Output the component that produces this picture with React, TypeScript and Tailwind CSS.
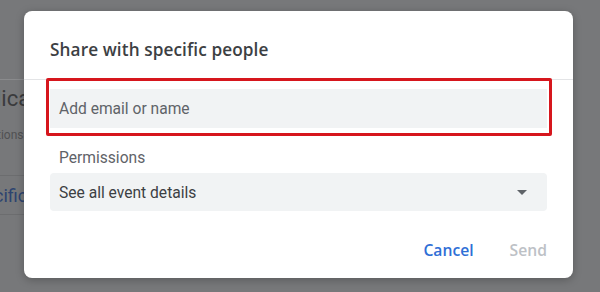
import React from "react";

export default function App() {
  return (
    <div
      className="relative w-[600px] h-[292px] overflow-hidden bg-[#77787a]"
      style={{ fontFamily: "Roboto, 'Liberation Sans', sans-serif" }}
    >
      {/* dimmed page behind the dialog */}
      <div className="flex flex-col pt-[79px] w-[60px]">
        <div className="h-px bg-[#8a8b8d]" />
        <div className="h-[38px] flex items-center -ml-[4px] text-[22px] text-[#3a3b3d] leading-none whitespace-nowrap">
          lica
        </div>
        <div className="h-[26px] flex items-end -ml-[3px] text-[12px] text-[#505153] whitespace-nowrap">
          tions
        </div>
        <div className="h-[31px]" />
        <div className="h-px bg-[#6c6d6f]" />
        <div className="h-[38px] flex items-center -ml-[6px] text-[18px] text-[#2d4470] whitespace-nowrap">
          cific
        </div>
        <div className="h-px bg-[#6c6d6f]" />
      </div>

      {/* dialog */}
      <div className="absolute left-[24px] top-[11px] w-[549px] h-[267px] rounded-[8px] bg-white shadow-[0_2px_8px_rgba(0,0,0,0.25)] flex flex-col">
        <div
          className="pt-[27px] pl-[26px] h-[68px] text-[17.2px] font-semibold text-[#3c4043] leading-[24px] tracking-[0.1px]"
          style={{ fontFamily: "'Open Sans', Roboto, sans-serif" }}
        >
          Share with specific people
        </div>
        <div className="h-px bg-[#e3e4e6]" />
        <div className="px-[26px] flex flex-col">
          <div className="relative mt-[9px] h-[39px] bg-[#f1f3f4] flex items-center pl-[9px] pt-[3px] text-[15.6px] text-[#5f6368]">
            Add email or name
            <div className="absolute -left-[4px] -right-[5px] -top-[11px] -bottom-[8px] border-[3px] border-[#d6161d] rounded-[2px]" />
          </div>
          <div className="mt-[20px] pl-[9px] h-[20px] leading-[20px] text-[15.6px] text-[#5f6368]">
            Permissions
          </div>
          <div className="mt-[5px] h-[38px] rounded-[4px] bg-[#f1f3f4] flex items-center pl-[9px] pr-[20px] text-[15.6px] text-[#3c4043]">
            <span className="flex-1 pt-[3px]">See all event details</span>
            <svg width="10" height="5" viewBox="0 0 10 5">
              <path d="M0 0 L10 0 L5 5 Z" fill="#5f6368" />
            </svg>
          </div>
          <div
            className="mt-[28px] flex justify-end items-center gap-[36px] text-[15.7px] font-semibold"
            style={{ fontFamily: "'Open Sans', Roboto, sans-serif" }}
          >
            <span className="text-[#2f6fd6]">Cancel</span>
            <span className="text-[#bdc1c6]">Send</span>
          </div>
        </div>
      </div>
    </div>
  );
}
